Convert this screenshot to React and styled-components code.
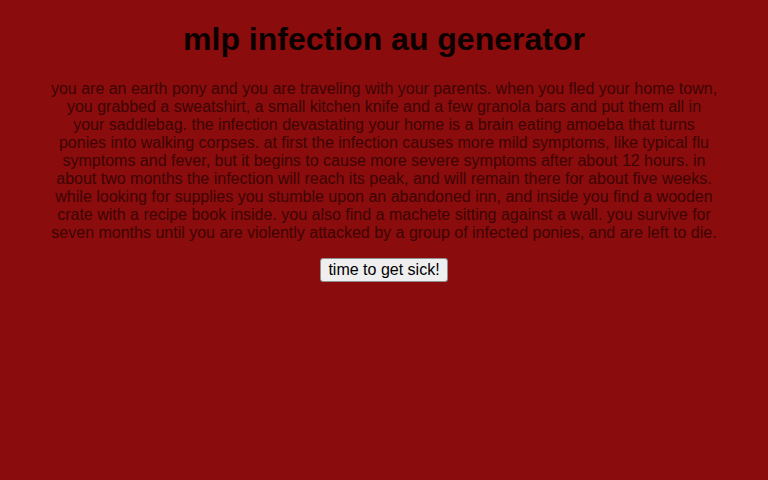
import React, { useState } from "react";
import styled, { createGlobalStyle } from "styled-components";

const GlobalStyle = createGlobalStyle`
  html, body {
    background-color: #8b0c0c;
  }
  body {
    margin: 0 8px;
    font-family: "Liberation Sans", Arial, sans-serif;
  }
`;

const Page = styled.div`
  text-align: center;
`;

const Title = styled.h1`
  font-size: 32px;
  font-weight: bold;
  margin: 21.44px 0;
  color: #0a0000;
`;

const Story = styled.p`
  font-size: 16px;
  line-height: 18px;
  margin: 16px auto;
  max-width: 668px;
  color: #3c0404;
`;

const SickButton = styled.button`
  font-family: "Liberation Sans", Arial, sans-serif;
  font-size: 16px;
  padding: 2px 7px;
  background-color: #efefef;
  border: 1px solid #8f8f8f;
  border-radius: 3px;
  color: #000;
  cursor: pointer;
`;

const story =
  "you are an earth pony and you are traveling with your parents. when you fled your home town, you grabbed a sweatshirt, a small kitchen knife and a few granola bars and put them all in your saddlebag. the infection devastating your home is a brain eating amoeba that turns ponies into walking corpses. at first the infection causes more mild symptoms, like typical flu symptoms and fever, but it begins to cause more severe symptoms after about 12 hours. in about two months the infection will reach its peak, and will remain there for about five weeks. while looking for supplies you stumble upon an abandoned inn, and inside you find a wooden crate with a recipe book inside. you also find a machete sitting against a wall. you survive for seven months until you are violently attacked by a group of infected ponies, and are left to die.";

export default function App() {
  const [text] = useState(story);
  return (
    <Page>
      <GlobalStyle />
      <Title>mlp infection au generator</Title>
      <Story>{text}</Story>
      <SickButton>time to get sick!</SickButton>
    </Page>
  );
}
